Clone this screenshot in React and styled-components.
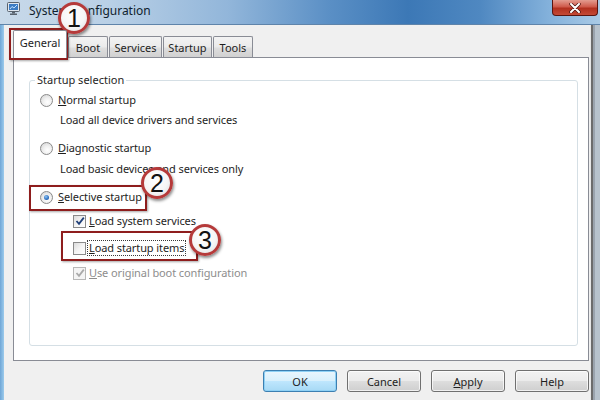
import styled, { createGlobalStyle, css } from "styled-components";

const GlobalStyle = createGlobalStyle`
  *, *::before, *::after {
    box-sizing: border-box;
  }
  html, body {
    margin: 0;
    padding: 0;
  }
  body {
    width: 600px;
    height: 400px;
    overflow: hidden;
    background: #f0f0f0;
    font-family: "Noto Sans", "Open Sans", sans-serif;
    color: #1e1e1e;
  }
`;

const Window = styled.div`
  position: relative;
  width: 600px;
  height: 400px;
  display: flex;
  flex-direction: column;
  overflow: hidden;
`;

const TitleBar = styled.div`
  flex: none;
  height: 25px;
  display: flex;
  align-items: flex-start;
  gap: 9px;
  padding: 2px 2px 0 7px;
  background: linear-gradient(
    90deg,
    #c8d9e9 0%,
    #b9d0e6 18%,
    #92b6da 38%,
    #5a8fc5 55%,
    #3c78b6 68%,
    #4f88c1 80%,
    #86b3dc 92%,
    #a9cae6 100%
  );
  border-bottom: 1px solid #5f84aa;
`;

const Title = styled.span`
  font-size: 12px;
  line-height: 17px;
  color: #0f1e2e;
`;

const CloseButton = styled.div`
  margin: -2px 0 0 auto;
  width: 46px;
  height: 16px;
  border: 1px solid #5a1510;
  border-top: none;
  border-radius: 0 0 4px 4px;
  background: linear-gradient(180deg, #e39c90 0%, #cf5a4b 45%, #b2301f 55%, #c44a36 100%);
  display: flex;
  align-items: center;
  justify-content: center;
`;

const Body = styled.div`
  flex: 1;
  display: flex;
  min-height: 0;
`;

const LeftFrame = styled.div`
  width: 4px;
  background: linear-gradient(90deg, #6fa6d6, #9ccbec);
`;

const RightFrame = styled.div`
  width: 10px;
  background: linear-gradient(90deg, #e6e6e6 0 1px, #6c6c6c 1px 3px, #9aa3ad 3px 5px, #b7c2cc 5px);
`;

const Client = styled.div`
  flex: 1;
  display: flex;
  flex-direction: column;
  padding: 5px 1px 8px 9px;
  background: #f0f0f0;
`;

const TabRow = styled.div`
  display: flex;
  align-items: flex-end;
  gap: 1px;
  height: 28px;
  margin-bottom: -1px;
`;

const Tab = styled.div`
  width: ${(p) => p.$w}px;
  height: 22px;
  display: flex;
  align-items: center;
  justify-content: center;
  font-size: 11px;
  border: 1px solid #898c95;
  border-bottom: none;
  border-radius: 2px 2px 0 0;
  background: linear-gradient(180deg, #f3f3f3 0%, #ebebeb 45%, #dddddd 55%, #cfcfcf 100%);
  ${(p) =>
    p.$active &&
    css`
      position: relative;
      z-index: 1;
      height: 28px;
      padding-bottom: 5px;
      background: #ffffff;
    `}
`;

const Panel = styled.div`
  flex: 1;
  display: flex;
  flex-direction: column;
  background: #ffffff;
  border: 1px solid #898c95;
  padding: 14px 10px 14px 15px;
`;

const GroupBox = styled.fieldset`
  flex: 1;
  margin: 0;
  padding: 3px 0 0 5px;
  border: 1px solid #d5dfe5;
  border-radius: 3px;
  font-size: 11px;
`;

const Legend = styled.legend`
  padding: 0 2px;
  line-height: 16px;
  font-size: 11px;
`;

const Row = styled.div`
  display: flex;
  align-items: center;
  gap: ${(p) => p.$gap ?? 4}px;
  height: 18px;
  margin-top: ${(p) => p.$mt}px;
  margin-left: ${(p) => p.$indent}px;
  letter-spacing: -0.1px;
  color: ${(p) => (p.$disabled ? "#8d8d8d" : "#1e1e1e")};
`;

const Radio = styled.span`
  position: relative;
  width: 13px;
  height: 13px;
  border-radius: 50%;
  border: 1px solid #8a8a8a;
  background: radial-gradient(circle at 60% 65%, #ffffff 0%, #f1f1f1 40%, #d0d0d0 100%);
  ${(p) =>
    p.$checked &&
    css`
      &::after {
        content: "";
        position: absolute;
        left: 3px;
        top: 3px;
        width: 5px;
        height: 5px;
        border-radius: 50%;
        background: radial-gradient(circle at 40% 35%, #8cc4f4 0%, #2f6fbf 60%, #1a4f95 100%);
      }
    `}
`;

const Box = styled.span`
  width: 13px;
  height: 13px;
  border: 1px solid ${(p) => (p.$disabled ? "#b8b8b8" : "#8a8a8a")};
  background: ${(p) =>
    p.$disabled
      ? "#f4f4f4"
      : "linear-gradient(135deg, #dcdcdc 0%, #f4f4f4 50%, #ffffff 100%)"};
  display: flex;
  align-items: center;
  justify-content: center;
`;

const Label = styled.span`
  padding: 0 1px;
  line-height: 14px;
  ${(p) =>
    p.$focus &&
    css`
      outline: 1px dotted #3a3a3a;
    `}
`;

const ButtonRow = styled.div`
  display: flex;
  justify-content: flex-end;
  gap: 10px;
  margin-top: 9px;
`;

const Button = styled.div`
  width: 74px;
  height: 22px;
  display: flex;
  align-items: center;
  justify-content: center;
  font-size: 11px;
  border: 1px solid #707070;
  border-radius: 3px;
  background: linear-gradient(180deg, #f2f2f2 0%, #ebebeb 48%, #dddddd 52%, #cfcfcf 100%);
  box-shadow: inset 0 0 0 1px rgba(255, 255, 255, 0.7);
  ${(p) =>
    p.$default &&
    css`
      border-color: #3c7fb1;
      background: linear-gradient(180deg, #eaf6fd 0%, #d9f0fc 48%, #bee6fd 52%, #a7d9f5 100%);
      box-shadow: inset 0 0 0 1px #8fd1f5;
    `}
`;

const Frame = styled.div`
  position: absolute;
  left: ${(p) => p.$x}px;
  top: ${(p) => p.$y}px;
  width: ${(p) => p.$w}px;
  height: ${(p) => p.$h}px;
  border: 2px solid #8e1d1d;
  box-shadow: 1px 1px 2px rgba(0, 0, 0, 0.35);
  pointer-events: none;
`;

const Marker = styled.div`
  position: absolute;
  left: ${(p) => p.$x - 16}px;
  top: ${(p) => p.$y - 16}px;
  width: 32px;
  height: 32px;
  border-radius: 50%;
  border: 3px solid #b53a3a;
  background: radial-gradient(circle at 45% 40%, #ffffff 0%, #f6f6f6 55%, #d9d9d9 100%);
  box-shadow: 1px 2px 3px rgba(0, 0, 0, 0.45);
  display: flex;
  align-items: center;
  justify-content: center;
  font-family: "Liberation Sans", Arial, sans-serif;
  font-size: 25px;
  line-height: 1;
  color: #111;
`;

const AppIcon = () => (
  <svg width="13" height="13" viewBox="0 0 13 13">
    <rect x="0.5" y="0.5" width="12" height="9" rx="1" fill="#dfe6ee" stroke="#59636e" />
    <rect x="2" y="2" width="9" height="6" fill="#3b7cc4" />
    <path d="M3 7 L5 4.5 L7 6 L10 3" stroke="#bfe0ff" strokeWidth="1" fill="none" />
    <rect x="5" y="10" width="3" height="1.5" fill="#59636e" />
    <rect x="3" y="11.5" width="7" height="1.5" fill="#59636e" />
  </svg>
);

const CloseIcon = () => (
  <svg width="12" height="10" viewBox="0 0 12 10">
    <path d="M2 1 L10 9 M10 1 L2 9" stroke="#4a1410" strokeWidth="3.4" strokeLinecap="round" />
    <path d="M2 1 L10 9 M10 1 L2 9" stroke="#ffffff" strokeWidth="2" strokeLinecap="round" />
  </svg>
);

const CheckMark = ({ color }) => (
  <svg width="10" height="10" viewBox="0 0 10 10">
    <path d="M1.5 5 L4 7.8 L8.8 1.6" stroke={color} strokeWidth="1.8" fill="none" />
  </svg>
);

const tabs = [
  { name: "General", w: 54, active: true },
  { name: "Boot", w: 40 },
  { name: "Services", w: 53 },
  { name: "Startup", w: 49 },
  { name: "Tools", w: 40 },
];

function App() {
  return (
    <Window>
      <GlobalStyle />
      <TitleBar>
        <AppIcon />
        <Title>System Configuration</Title>
        <CloseButton>
          <CloseIcon />
        </CloseButton>
      </TitleBar>

      <Body>
        <LeftFrame />
        <Client>
          <TabRow>
            {tabs.map((t) => (
              <Tab key={t.name} $w={t.w} $active={t.active}>
                {t.name}
              </Tab>
            ))}
          </TabRow>

          <Panel>
            <GroupBox>
              <Legend>Startup selection</Legend>

              <Row $mt={0} $indent={5}>
                <Radio />
                <Label>
                  <u>N</u>ormal startup
                </Label>
              </Row>
              <Row $mt={1} $indent={25}>
                Load all device drivers and services
              </Row>

              <Row $mt={11} $indent={5}>
                <Radio />
                <Label>
                  <u>D</u>iagnostic startup
                </Label>
              </Row>
              <Row $mt={2} $indent={25}>
                Load basic devices and services only
              </Row>

              <Row $mt={11} $indent={5}>
                <Radio $checked />
                <Label>
                  <u>S</u>elective startup
                </Label>
              </Row>

              <Row $mt={6} $indent={38} $gap={2}>
                <Box>
                  <CheckMark color="#1f3f78" />
                </Box>
                <Label>
                  <u>L</u>oad system services
                </Label>
              </Row>
              <Row $mt={9} $indent={38} $gap={2}>
                <Box />
                <Label $focus>
                  <u>L</u>oad startup items
                </Label>
              </Row>
              <Row $mt={7} $indent={38} $gap={2} $disabled>
                <Box $disabled>
                  <CheckMark color="#a9a9a9" />
                </Box>
                <Label>
                  <u>U</u>se original boot configuration
                </Label>
              </Row>
            </GroupBox>
          </Panel>

          <ButtonRow>
            <Button $default>OK</Button>
            <Button>Cancel</Button>
            <Button>
              <span>
                <u>A</u>pply
              </span>
            </Button>
            <Button>Help</Button>
          </ButtonRow>
        </Client>
        <RightFrame />
      </Body>

      {/* annotations drawn over the dialog */}
      <Frame $x={9} $y={28} $w={59} $h={32} />
      <Frame $x={29} $y={185} $w={118} $h={26} />
      <Frame $x={61} $y={231} $w={137} $h={30} />
      <Marker $x={74} $y={18}>1</Marker>
      <Marker $x={157} $y={183}>2</Marker>
      <Marker $x={205} $y={240}>3</Marker>
    </Window>
  );
}

export default App;
